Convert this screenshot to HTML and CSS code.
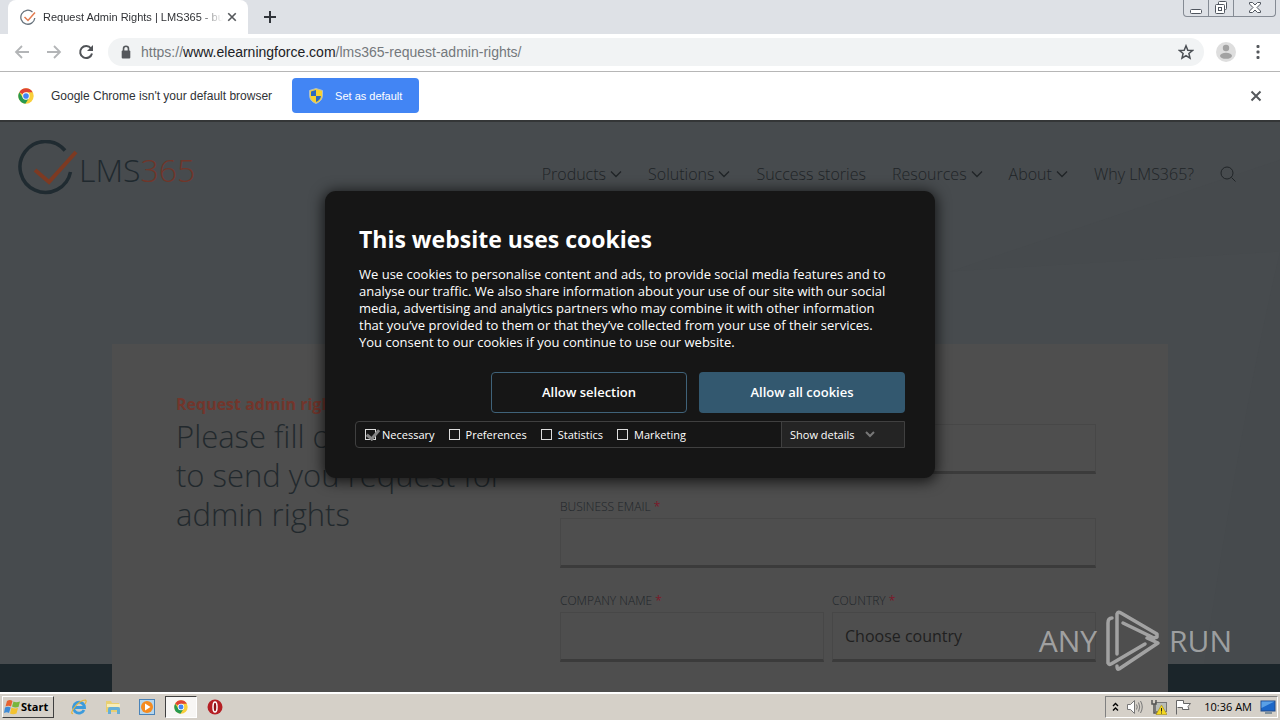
FILE: index.html
```html
<!DOCTYPE html>
<html lang="en">
<head>
<meta charset="utf-8">
<title>Request Admin Rights | LMS365</title>
<link rel="stylesheet" href="styles.css">
</head>
<body>
<svg class="defs" aria-hidden="true">
  <symbol id="chrome" viewBox="0 0 48 48">
    <circle cx="24" cy="24" r="23" fill="#f9cf3b"/>
    <path d="M24 24 4 12.500A23 23 0 0 1 44 12.500L24 13Z" fill="#df4335"/>
    <path d="M4 12.500A23 23 0 0 0 22 47L33.500 29.500 24 24 14.500 29.500Z" fill="#27994f"/>
    <circle cx="24" cy="24" r="11" fill="#fff"/>
    <circle cx="24" cy="24" r="8.500" fill="#4285f4"/>
  </symbol>
  <symbol id="chevron" viewBox="0 0 12 8"><path d="M1 1.500 6 6.500 11 1.500" fill="none" stroke="currentColor" stroke-width="1.300"/></symbol>
  <symbol id="cross" viewBox="0 0 12 12"><path d="M1.500 1.500 10.500 10.500M10.500 1.500 1.500 10.500" fill="none" stroke="currentColor" stroke-width="2"/></symbol>
</svg>

<div class="tabstrip">
  <div class="tab">
    <svg class="i16" viewBox="0 0 16 16" fill="none"><path d="M12.500 3A7 7 0 1 0 14.800 9" stroke="#68737d" stroke-width="1.300"/><path d="M4.500 8 8 11.500 15 3.500" stroke="#e27b50" stroke-width="1.500"/></svg>
    <span class="tab-title">Request Admin Rights | LMS365 - bu</span>
    <button class="plain" aria-label="Close tab"><svg class="i10"><use href="#cross"/></svg></button>
  </div>
  <button class="plain new-tab" aria-label="New tab"><svg class="i12" viewBox="0 0 12 12"><path d="M6 0V12M0 6H12" stroke="#30343a" stroke-width="2"/></svg></button>
  <div class="window-controls">
    <button aria-label="Minimize"><svg width="14" height="14" viewBox="0 0 14 14"><rect x="1.500" y="8.500" width="11" height="4" rx="1" fill="#fff" stroke="#50565f"/></svg></button>
    <button aria-label="Restore"><svg width="14" height="14" viewBox="0 0 14 14" fill="#fff" stroke="#50565f"><rect x="4.500" y=".5" width="8" height="8" rx="1"/><rect x="1.500" y="3.500" width="9" height="9" rx="1"/><rect x="4.500" y="6.500" width="3" height="3"/></svg></button>
    <button class="wide" aria-label="Close window"><svg width="14" height="14" viewBox="0 0 14 14"><path d="M1.500 1.500H4.500L7 4 9.500 1.500H12.500V3L9 6.500 12.500 10V11.500H9.500L7 9 4.500 11.500H1.500V10L5 6.500 1.500 3Z" fill="#fff" stroke="#50565f"/></svg></button>
  </div>
</div>

<div class="toolbar">
  <button class="plain faded" aria-label="Back"><svg class="i16" viewBox="0 0 16 16" fill="none" stroke="currentColor" stroke-width="1.800"><path d="M15 8H2M8 2 2 8 8 14"/></svg></button>
  <button class="plain faded" aria-label="Forward"><svg class="i16" viewBox="0 0 16 16" fill="none" stroke="currentColor" stroke-width="1.800"><path d="M1 8H14M8 2 14 8 8 14"/></svg></button>
  <button class="plain" aria-label="Reload"><svg class="i16" viewBox="0 0 16 16"><path d="M13 4.500A6 6 0 1 0 14 9.500" fill="none" stroke="#505357" stroke-width="2"/><path d="M15 1V7H9Z" fill="#505357"/></svg></button>
  <div class="address">
    <svg class="lock" viewBox="0 0 10 13"><rect x="1" y="5" width="8" height="7.500" rx="1" fill="#55585c"/><path d="M2.700 5.500V3.500A2.300 2.300 0 0 1 7.300 3.500V5.500" fill="none" stroke="#55585c" stroke-width="1.500"/></svg>
    <span class="url">https://<b>www.elearningforce.com</b>/lms365-request-admin-rights/</span>
    <button class="plain" aria-label="Bookmark"><svg class="i16" viewBox="0 0 16 16"><path d="M8 1.800 9.800 6.200 14.500 6.500 10.900 9.500 12 14.200 8 11.700 4 14.200 5.100 9.500 1.500 6.500 6.200 6.200Z" fill="none" stroke="#4b4f54" stroke-width="1.500"/></svg></button>
  </div>
  <button class="plain profile" aria-label="Profile"><svg width="20" height="20" viewBox="0 0 20 20"><circle cx="10" cy="10" r="10" fill="#dedede"/><circle cx="10" cy="6" r="3.200" fill="#a2a2a2"/><ellipse cx="10" cy="13.800" rx="6" ry="3" fill="#a2a2a2"/></svg></button>
  <button class="plain" aria-label="Menu"><svg width="4" height="14" viewBox="0 0 4 14" fill="#55585c"><rect x=".5" y="0" width="3" height="3" rx="1"/><rect x=".5" y="5.500" width="3" height="3" rx="1"/><rect x=".5" y="11" width="3" height="3" rx="1"/></svg></button>
</div>

<div class="infobar">
  <svg class="i16"><use href="#chrome"/></svg>
  <span class="info-text">Google Chrome isn't your default browser</span>
  <button class="set-default"><svg width="14" height="16" viewBox="0 0 14 16"><path d="M7 .5 13.500 2.500V7Q13.500 13 7 15.500 .5 13 .5 7V2.500Z" fill="#f8d12e"/><path d="M7 2V8H2V3.500ZM7 8H12Q11.500 12 7 14Z" fill="#2d69bd"/><path d="M7 .5 13.500 2.500V7Q13.500 13 7 15.500 .5 13 .5 7V2.500Z" fill="none" stroke="#aebfc9"/></svg>Set as default</button>
  <button class="plain info-close" aria-label="Dismiss"><svg class="i12"><use href="#cross"/></svg></button>
</div>

<main class="page">
  <svg class="backdrop" viewBox="0 0 1280 572" preserveAspectRatio="none" aria-hidden="true"><path d="M950 150 1280 38V572H1200Q1240 300 1280 130" fill="#464a4d"/></svg>
  <header class="site-header">
    <a class="logo" href="#"><svg width="60" height="56" viewBox="0 0 60 56" fill="none"><path d="M47 10.500A25.500 25.500 0 1 0 52.500 32" stroke="#202b31" stroke-width="3.500"/><path d="M17 30 31 42 58 12" stroke="#7d3a22" stroke-width="4"/></svg><span class="logo-text">LMS<em>365</em></span></a>
    <nav class="nav">
      <a href="#">Products<svg><use href="#chevron"/></svg></a>
      <a href="#">Solutions<svg><use href="#chevron"/></svg></a>
      <a href="#">Success stories</a>
      <a href="#">Resources<svg><use href="#chevron"/></svg></a>
      <a href="#">About<svg><use href="#chevron"/></svg></a>
      <a href="#">Why LMS365?</a>
      <button class="plain search" aria-label="Search"><svg class="i16" viewBox="0 0 16 16" fill="none" stroke="#202427"><circle cx="7" cy="7" r="6"/><path d="M11.500 11.500 15.500 15.500"/></svg></button>
    </nav>
  </header>
  <section class="card">
    <div class="intro">
      <h2>Request admin rights</h2>
      <p>Please fill out<br>to send you request for<br>admin rights</p>
    </div>
    <form class="form">
      <div class="field"><input type="text" aria-label="Full name"></div>
      <div class="field"><label for="email">BUSINESS EMAIL <i>*</i></label><input id="email" type="email"></div>
      <div class="pair">
        <div class="field"><label for="company">COMPANY NAME <i>*</i></label><input id="company" type="text"></div>
        <div class="field"><label for="country">COUNTRY <i>*</i></label><select id="country"><option>Choose country</option></select></div>
      </div>
    </form>
  </section>
  <div class="footer-band"></div>
</main>

<div class="dialog" role="dialog" aria-labelledby="cookie-title">
  <h1 id="cookie-title">This website uses cookies</h1>
  <p class="cookie-text">We use cookies to personalise content and ads, to provide social media features and to<br>analyse our traffic. We also share information about your use of our site with our social<br>media, advertising and analytics partners who may combine it with other information<br>that you’ve provided to them or that they’ve collected from your use of their services.<br>You consent to our cookies if you continue to use our website.</p>
  <div class="actions">
    <button class="outline">Allow selection</button>
    <button class="solid">Allow all cookies</button>
  </div>
  <div class="options">
    <div class="checks">
      <label><input type="checkbox" checked disabled>Necessary</label>
      <label><input type="checkbox">Preferences</label>
      <label><input type="checkbox">Statistics</label>
      <label><input type="checkbox">Marketing</label>
    </div>
    <button class="details">Show details<svg viewBox="0 0 10 7"><path d="M1 1 5 5 9 1" fill="none" stroke="currentColor" stroke-width="2"/></svg></button>
  </div>
</div>

<div class="watermark"><span>ANY</span><svg width="56" height="62" viewBox="0 0 56 62" fill="none" stroke="currentColor" stroke-width="3.500" stroke-linejoin="round" stroke-linecap="round"><path d="M7 8Q3 8 3 13V53Q4 55 6 54L40 34M12 44V4Q13 1 16 3L52 24V27L49 28 18 13M42 28 53 33 14 59Q12 60 12 56"/></svg><span>RUN</span></div>

<footer class="taskbar">
  <button class="start"><svg width="17" height="16" viewBox="0 0 17 16"><path d="M3 2Q6 0 8.500 2L7 7.500Q4.500 6 1.500 7.500Z" fill="#e76331"/><path d="M9.500 2.500Q12 4 16 2.500L14.500 8Q11 9 8 7.500Z" fill="#78b63c"/><path d="M1 8.500Q4 7 6.700 8.500L5 14Q3 12.500 0 14Z" fill="#3f8bd6"/><path d="M7.500 8.500Q10.500 10 14 9L12.500 14.500Q9 16 6 14.500Z" fill="#f3c22f"/></svg>Start</button>
  <div class="quick">
    <button class="plain" aria-label="Internet Explorer"><svg class="i16" viewBox="0 0 16 16" fill="none"><path d="M13 11A5.500 5.500 0 1 1 13.500 8.500H4" stroke="#3c9bdc" stroke-width="2.800"/><path d="M2 14.500Q-1 15 3 9 9 1 14.500 1 16 2 14 5" stroke="#e8b63a" stroke-width="1.200"/></svg></button>
    <button class="plain" aria-label="Explorer"><svg class="i16" viewBox="0 0 16 16"><path d="M1 2H6L7 4H14V13H1Z" fill="#e8cf72"/><path d="M2 5H15V8H2Z" fill="#f7edb7"/><path d="M3 15V10Q3 8 5 8H13Q15 8 15 10V15H12V11H6V15Z" fill="#65afd7"/></svg></button>
    <button class="plain" aria-label="Media Player"><svg class="i16" viewBox="0 0 16 16"><rect x=".5" y=".5" width="15" height="15" fill="#b5d6ed" stroke="#4a83b8"/><circle cx="8" cy="8" r="6" fill="#f58b1f"/><path d="M6 4.500 11.500 8 6 11.500Z" fill="#fff"/></svg></button>
    <button class="plain pressed" aria-label="Chrome"><svg class="i14"><use href="#chrome"/></svg></button>
    <button class="plain" aria-label="Opera"><svg class="i16" viewBox="0 0 16 16"><circle cx="8" cy="8" r="7.500" fill="#b51f24"/><ellipse cx="8" cy="8" rx="2" ry="5" fill="#8f1216" stroke="#fff" stroke-width="1.500"/></svg></button>
  </div>
  <div class="tray">
    <svg width="7" height="10" viewBox="0 0 7 10" fill="none" stroke="#000" stroke-width="1.400"><path d="M1 4 3.500 1.500 6 4M1 8.500 3.500 6 6 8.500"/></svg>
    <svg class="i16" viewBox="0 0 16 16" fill="#fff" stroke="#777"><path d="M.5 5.500H3.500L7.500 1.500V14.500L3.500 10.500H.5Z"/><path d="M9.500 5.500Q11 8 9.500 10.500M11.500 3.500Q14 8 11.500 12.500M13.500 2Q17 8 13.500 14" fill="none"/></svg>
    <svg class="i16" viewBox="0 0 16 16"><rect x="4.500" y="3.500" width="11" height="9" fill="#b9bdb7" stroke="#777"/><path d="M1 1V5H5V1M3 5V14H7" fill="none" stroke="#555" stroke-width="1.500"/><path d="M10.500 6 16 15.500H5Z" fill="#f4d820" stroke="#a28a10" stroke-width=".6"/><path d="M10.500 9V12.500M10.500 13.500V14.500" stroke="#222"/></svg>
    <svg class="i16" viewBox="0 0 16 16" fill="#fff" stroke="#666"><path d="M1.500 15.500V1.500H8.500V4.500H15.500L13 7.500 14 10.500H7.500V8.500H2.500"/></svg>
    <time>10:36 AM</time>
    <svg class="i16" viewBox="0 0 16 16"><rect x="1" y="2" width="14" height="10" fill="#1c67c8" stroke="#234b88"/><path d="M1.500 2.500H14.500L1.500 9Z" fill="#5aa0e6"/><path d="M5 14H12" stroke="#81919b" stroke-width="2"/></svg>
  </div>
</footer>
</body>
</html>
```
FILE: styles.css
```css
* { box-sizing: border-box; }
body {
  margin: 0;
  height: 100vh;
  display: flex;
  flex-direction: column;
  overflow: hidden;
  position: relative;
  font: 12px/16px "Open Sans", "Noto Sans", sans-serif;
  color: #303236;
}
button, input, select { font: inherit; color: inherit; margin: 0; }
svg { display: block; flex: none; }
.defs { position: absolute; width: 0; height: 0; }
.plain { border: 0; background: none; padding: 0; display: flex; align-items: center; justify-content: center; color: #55585c; }
.i10 { width: 10px; height: 10px; }
.i12 { width: 12px; height: 12px; }
.i14 { width: 14px; height: 14px; }
.i16 { width: 16px; height: 16px; }

.tabstrip, .toolbar, .infobar { font-family: "Liberation Sans", sans-serif; }
.tabstrip { display: flex; height: 34px; flex: none; background: #dee1e6; padding-left: 8px; }
.tab { display: flex; align-items: center; width: 240px; padding: 0 11px 0 12px; background: #fff; border-radius: 8px 8px 0 0; }
.tab-title { flex: 1; min-width: 0; margin-left: 7px; font-size: 11px; white-space: nowrap; -webkit-mask: linear-gradient(to left, transparent, #000 24px); mask: linear-gradient(to left, transparent, #000 24px); }
.tab .plain { margin-left: 4px; }
.new-tab { width: 44px; }
.window-controls { display: flex; margin-left: auto; margin-right: 4px; height: 17px; border: 1px solid #858b94; border-top: 0; border-radius: 0 0 4px 4px; }
.window-controls button { display: flex; align-items: center; justify-content: center; width: 25px; padding: 0; border: 0; border-right: 1px solid #858b94; background: none; }
.window-controls .wide { width: 41px; border-right: 0; }

.toolbar { display: flex; align-items: center; gap: 16px; height: 38px; flex: none; padding: 0 20px 1px 14px; background: #fff; border-bottom: 1px solid #b6b6b6; }
.faded { color: #b3b5b7; }
.address { flex: 1; display: flex; align-items: center; height: 28px; padding: 0 10px 0 12px; margin-left: -2px; border-radius: 14px; background: #f1f3f4; }
.lock { width: 12px; height: 14px; }
.url { flex: 1; margin-left: 9px; font-size: 14px; color: #74787c; }
.url b { font-weight: 400; color: #202124; }
.profile { margin: 0 4px 0 -4px; }

.infobar { display: flex; align-items: center; height: 48px; flex: none; padding: 0 18px 1px; background: #fff; }
.info-text { margin-left: 17px; font-size: 12px; }
.set-default { display: flex; align-items: center; height: 35px; margin-left: 20px; padding: 0 17px; gap: 12px; border: 0; border-radius: 4px; background: #4285f4; color: #fff; font-size: 11px; }
.info-close { margin-left: auto; }

.page { position: relative; flex: 1; min-height: 0; display: flex; flex-direction: column; overflow: hidden; background: #474b4e; border-top: 2px solid #343637; isolation: isolate; }
.backdrop { position: absolute; inset: 0; width: 100%; height: 100%; z-index: -1; }
.site-header { display: flex; justify-content: space-between; align-items: flex-start; flex: none; height: 222px; padding: 16px 44px 0 18px; }
.logo { display: flex; align-items: center; gap: 1px; text-decoration: none; }
.logo-text { font-size: 32px; line-height: 56px; padding-top: 4px; font-weight: 300; color: #20292e; }
.logo-text em { font-style: normal; color: #70362a; }
.nav { display: flex; align-items: center; gap: 26px; padding-top: 24px; font-size: 16px; line-height: 24px; font-weight: 300; }
.nav a { display: flex; align-items: center; gap: 4px; color: #202427; text-decoration: none; }
.nav a svg { width: 12px; height: 8px; }

.card { flex: 1; display: flex; margin: 0 112px; padding: 50px 72px 0 64px; background: #4e4e4e; }
.intro { flex: none; width: 384px; }
.intro h2 { margin: 0 0 3px; font-size: 16px; line-height: 20px; white-space: nowrap; color: #73352b; }
.intro p { margin: 0; font-size: 31px; line-height: 39px; font-weight: 300; color: #22292d; }
.form { flex: 1; display: flex; flex-direction: column; gap: 25px; padding-top: 30px; font-weight: 300; }
.field { display: flex; flex-direction: column; gap: 3px; }
.field label { line-height: 16px; color: #202529; }
.field i { font-style: normal; font-weight: 400; color: #7b1829; }
.field input, .field select { width: 100%; height: 50px; padding: 0 12px; border: 1px solid #474747; border-bottom: 3px solid #3b3b3b; border-radius: 0; background: #4e4e4e; }
.field select { appearance: none; font-size: 16px; line-height: 24px; font-weight: 400; color: #202020; }
.pair { display: grid; grid-template-columns: 1fr 1fr; gap: 8px; }
.footer-band { position: absolute; left: 0; right: 0; bottom: 0; height: 28px; z-index: -1; background: #1b252a; }

.dialog { position: absolute; left: 50%; top: 191px; transform: translateX(-50%); margin-left: -10px; width: 610px; padding: 33px 30px 30px; border-radius: 11px; background: #161616; box-shadow: 0 2px 14px 2px rgba(0, 0, 0, .7); color: #fff; }
.dialog h1 { margin: 0 4px; font-size: 23px; line-height: 30px; }
.cookie-text { margin: 12px 4px 21px; font-size: 13px; line-height: 17px; white-space: nowrap; }
.actions { display: flex; justify-content: flex-end; gap: 12px; }
.actions button { height: 41px; padding: 0 0 2px; border-radius: 4px; font-size: 13px; font-weight: 600; color: #fff; }
.outline { width: 196px; border: 1px solid #3f6279; background: #161616; }
.solid { width: 206px; border: 0; background: #33586f; }
.options { display: flex; height: 27px; margin-top: 8px; border: 1px solid #404040; border-radius: 4px 0 0 4px; font-size: 11px; }
.checks { flex: 1; display: flex; align-items: center; gap: 14px; padding-left: 9px; }
.checks label { display: flex; align-items: center; gap: 6px; }
.checks input { appearance: none; position: relative; width: 11px; height: 11px; border: 1px solid #ddd; }
.checks input:checked::before { content: ""; position: absolute; left: 3px; top: -3px; width: 5px; height: 10px; border: solid #858585; border-width: 0 3px 3px 0; transform: rotate(40deg); }
.details { display: flex; align-items: center; width: 123px; padding: 0 8px; gap: 10px; border: 0; border-left: 1px solid #404040; background: #242424; }
.details svg { width: 10px; height: 7px; color: #777; }

.watermark { position: absolute; right: 48px; bottom: 48px; display: flex; align-items: center; gap: 8px; color: rgba(255, 255, 255, .48); font-size: 30px; line-height: 62px; }

.taskbar { display: flex; align-items: center; height: 28px; flex: none; padding: 0 2px; background: #d5d0c8; border-top: 2px solid #fff; }
.start { display: flex; align-items: center; gap: 0; height: 22px; width: 52px; padding: 0 1px; border: 1px solid; border-color: #fff #404040 #404040 #fff; background: #d5d0c8; color: #000; font-weight: 700; font-size: 11px; }
.quick { display: flex; align-items: center; margin-left: 8px; }
.quick button { width: 34px; height: 22px; }
.quick .pressed { width: 32px; margin: 0 1px; background: #f7f6f4; border: 1px solid; border-color: #404040 #fff #fff #404040; }
.tray { display: flex; align-items: center; gap: 8px; height: 22px; margin-left: auto; padding: 0 1px 0 6px; border: 1px solid; border-color: #808080 #fff #fff #808080; color: #000; font-size: 11px; }
.tray time { margin-left: 5px; }
```
